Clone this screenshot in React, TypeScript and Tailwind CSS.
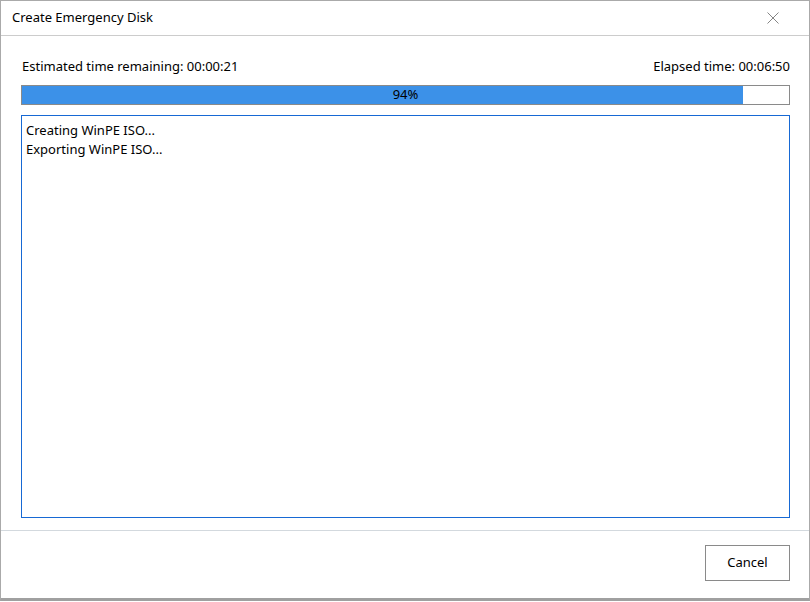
import React from 'react';

const FONT = "font-['Segoe_UI','Noto_Sans','Open_Sans',sans-serif]";

const logLines = ['Creating WinPE ISO...', 'Exporting WinPE ISO...'];

const App: React.FC = () => {
  const percent = 94;

  return (
    <div className={`w-[810px] h-[602px] bg-white ${FONT} text-[13px] text-[#000]`}>
      <div className="flex flex-col w-full h-[601px] border-x border-t border-[#aaaaaa] border-b-[3px] border-b-[#a0a0a0]">
        {/* title bar */}
        <div className="flex items-center justify-between h-[35px] shrink-0 border-b border-[#cccccc] pl-[11px] pr-[30px]">
          <span className="text-[13px] text-[#000]">Create Emergency Disk</span>
          <svg width="12" height="12" viewBox="0 0 12 12" className="text-[#858585]">
            <path d="M0.5 0.5 L11.5 11.5 M11.5 0.5 L0.5 11.5" stroke="currentColor" strokeWidth="1" fill="none" />
          </svg>
        </div>

        {/* body */}
        <div className="flex flex-col flex-1 pt-[22px] pl-[20px] pr-[19px]">
          <div className="flex items-center justify-between h-[18px] pl-[1px]">
            <span>Estimated time remaining: 00:00:21</span>
            <span>Elapsed time: 00:06:50</span>
          </div>

          <div className="relative mt-[9px] h-[20px] border border-[#8a8a8a] bg-white">
            <div className="h-full bg-[#3c91e8]" style={{ width: `${percent}%` }} />
            <div className="absolute inset-0 flex items-center justify-center text-[13px] text-[#000]">
              {percent}%
            </div>
          </div>

          <div className="mt-[10px] h-[403px] border border-[#1769d4] pl-[4px] pt-[5px] leading-[19px]">
            {logLines.map((line) => (
              <div key={line}>{line}</div>
            ))}
          </div>
        </div>

        {/* footer */}
        <div className="flex justify-end h-[68px] shrink-0 border-t border-[#d3d9de] pt-[14px] pr-[19px]">
          <button className="w-[85px] h-[36px] border border-[#8a8a8a] bg-white text-[13px] text-[#000]">
            Cancel
          </button>
        </div>
      </div>
    </div>
  );
};

export default App;
